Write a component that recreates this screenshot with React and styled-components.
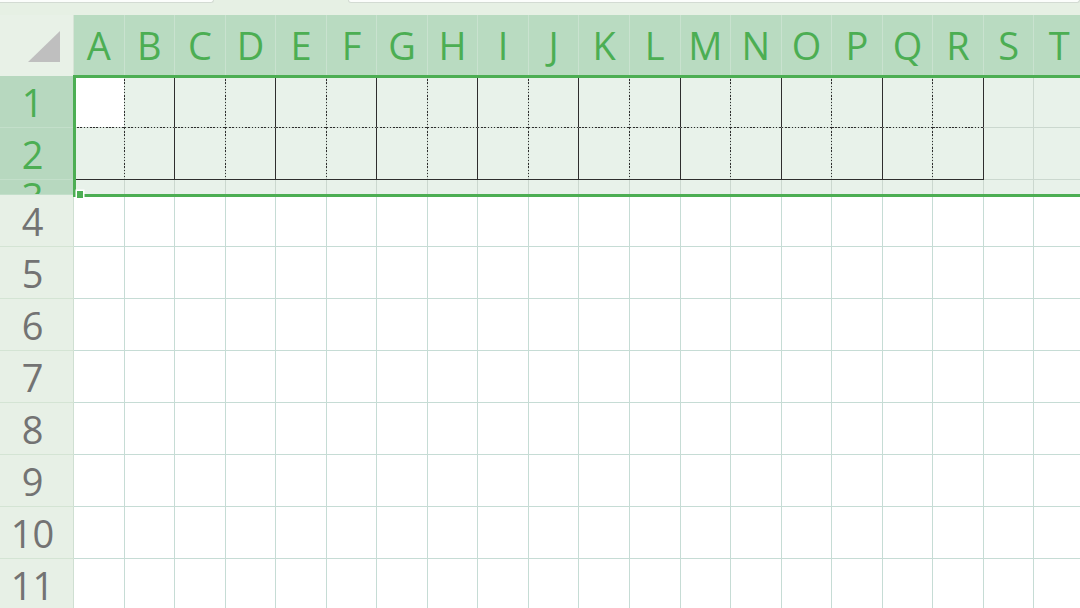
import React from 'react';
import styled, { createGlobalStyle, css } from 'styled-components';

const GREEN = '#4cae53';
const INK = '#2e2e2e';
const COLS = 'ABCDEFGHIJKLMNOPQRST'.split('');
const ROWS = [
  { n: 1, h: 52, sel: true },
  { n: 2, h: 52, sel: true },
  { n: 3, h: 15, sel: true },
  { n: 4, h: 52 },
  { n: 5, h: 52 },
  { n: 6, h: 52 },
  { n: 7, h: 52 },
  { n: 8, h: 52 },
  { n: 9, h: 52 },
  { n: 10, h: 52 },
  { n: 11, h: 52 },
];

const GlobalStyle = createGlobalStyle`
  html, body { margin: 0; padding: 0; background: #fff; overflow: hidden; }
  body { font-family: "Open Sans", "Noto Sans", sans-serif; }
  * { box-sizing: border-box; }
`;

const Page = styled.div`
  width: 1080px;
  height: 608px;
  overflow: hidden;
  background: #fff;
`;

const TopBar = styled.div`
  height: 15px;
  background: #e6f0e4;
  display: flex;
  align-items: flex-start;
  overflow: hidden;
`;

const Field = styled.div`
  height: 3px;
  width: ${p => p.$w ? `${p.$w}px` : 'auto'};
  flex: ${p => p.$w ? 'none' : 1};
  margin-left: ${p => p.$ml}px;
  background: #fbfdfb;
  border: 1px solid #d3dbd3;
  border-top: none;
  border-radius: 0 0 6px 6px;
`;

const SheetWrap = styled.div`
  position: relative;
`;

const Grid = styled.div`
  display: grid;
  grid-template-columns: 74px repeat(${COLS.length}, 50.56px);
  grid-template-rows: 61px ${ROWS.map(r => `${r.h}px`).join(' ')};
`;

const Corner = styled.div`
  background: #e8f1e7;
  border-right: 1px solid #d6e4d6;
  display: flex;
  align-items: flex-end;
  justify-content: flex-end;
  padding: 0 13px 14px 0;
`;

const ColHead = styled.div`
  background: #b9dbc1;
  border-right: 1px solid #c9e2cf;
  color: ${GREEN};
  font-size: 38px;
  line-height: 61px;
  text-align: center;
  overflow: hidden;
`;

const RowHead = styled.div`
  background: ${p => p.$sel ? '#b7d8bf' : '#e7f0e6'};
  border-bottom: 1px solid ${p => p.$sel ? '#c3dfca' : '#d4e4d4'};
  border-right: 1px solid #cfdfd2;
  color: ${p => p.$sel ? GREEN : '#737373'};
  font-size: 38px;
  line-height: ${p => p.$h < 30 ? '38px' : `${p.$h}px`};
  text-align: center;
  padding-right: 8px;
  overflow: hidden;
  & > span {
    display: block;
    margin-top: ${p => p.$h < 30 ? '-3px' : '0'};
  }
`;

const lineColor = sel => (sel ? '#cbd8cf' : '#c6dcd5');

const dots = dir => `repeating-linear-gradient(${dir}, ${INK} 0 1.5px, transparent 1.5px 3.2px)`;

const Cell = styled.div`
  position: relative;
  background: ${p => p.$active ? '#fff' : p.$sel ? '#e8f2ea' : '#fff'};
  border-right: 1px solid ${p => p.$right === 'solid' ? INK : lineColor(p.$sel)};
  border-bottom: 1px solid ${p => p.$bottom === 'solid' ? INK : lineColor(p.$sel)};

  ${p => p.$right === 'dotted' && css`
    &::before {
      content: '';
      position: absolute;
      top: 0;
      bottom: -1px;
      right: -1px;
      width: 1px;
      background: ${dots('to bottom')};
    }
  `}
  ${p => p.$bottom === 'dotted' && css`
    &::after {
      content: '';
      position: absolute;
      left: 0;
      right: -1px;
      bottom: -1px;
      height: 1px;
      background: ${dots('to right')};
    }
  `}
`;

const Selection = styled.div`
  position: absolute;
  top: 60px;
  left: 73px;
  width: 1100px;
  height: 122px;
  border: 3px solid ${GREEN};
  border-right: none;
  pointer-events: none;
`;

const FillHandle = styled.div`
  position: absolute;
  top: 176px;
  left: 77px;
  width: 6px;
  height: 7px;
  background: ${GREEN};
  box-shadow: 0 0 0 1.5px #fff;
`;

function Triangle() {
  return (
    <svg width="32" height="31" viewBox="0 0 32 31">
      <polygon points="32,0 32,31 0,31" fill="#bfbfbf" />
    </svg>
  );
}

function bordersFor(rowN, ci) {
  if (rowN > 2 || ci > 17) return {};
  return {
    $right: ci % 2 === 1 ? 'solid' : 'dotted',
    $bottom: rowN === 1 ? 'dotted' : 'solid',
  };
}

export default function App() {
  return (
    <Page>
      <GlobalStyle />
      <TopBar>
        <Field $w={222} $ml={-8} />
        <Field $ml={134} />
      </TopBar>
      <SheetWrap>
        <Grid>
          <Corner><Triangle /></Corner>
          {COLS.map(c => <ColHead key={c}>{c}</ColHead>)}
          {ROWS.map(r => (
            <React.Fragment key={r.n}>
              <RowHead $sel={r.sel} $h={r.h}><span>{r.n}</span></RowHead>
              {COLS.map((c, ci) => (
                <Cell
                  key={c}
                  $sel={r.sel}
                  $active={r.n === 1 && ci === 0}
                  {...bordersFor(r.n, ci)}
                />
              ))}
            </React.Fragment>
          ))}
        </Grid>
        <Selection />
        <FillHandle />
      </SheetWrap>
    </Page>
  );
}
